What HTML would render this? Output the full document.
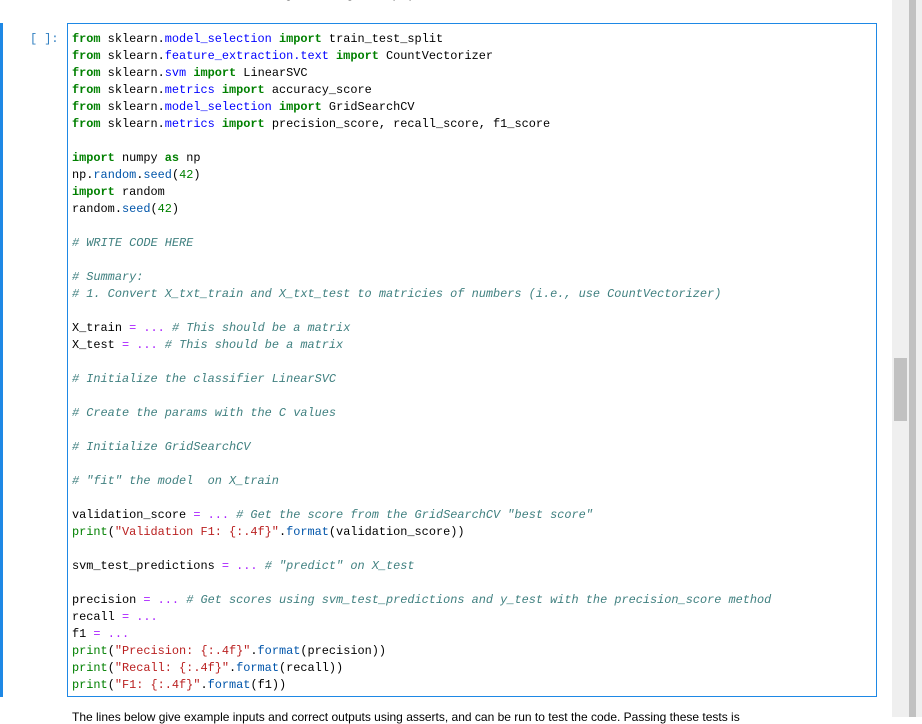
<!DOCTYPE html>
<html><head><style>
body{margin:0;width:922px;height:717px;background:#fff;overflow:hidden;position:relative;font-family:"Liberation Sans",sans-serif}
.bar{position:absolute;left:0;top:23px;width:3px;height:674px;background:#1e88e5}
.prompt{position:absolute;left:30px;top:31px;font:11.9px/17px "Liberation Mono",monospace;color:#307fc1}
.cell{position:absolute;left:67px;top:23px;width:808px;height:672px;border:1px solid #1e88e5;}
pre{margin:0;position:absolute;left:4px;top:7px;font:11.9px/17px "Liberation Mono",monospace;color:#000}
.k{color:#008000;font-weight:bold}.m{color:#0000ff}.c{color:#408080;font-style:italic}.o{color:#aa22ff}.s{color:#ba2121}.n{color:#008000}.b{color:#008000}.f{color:#0055aa}
.sb{position:absolute;left:892px;top:0;width:30px;height:717px;background:#efefef}
.sb2{position:absolute;left:909px;top:0;width:7px;height:717px;background:#c1c1c1}
.th{position:absolute;left:894px;top:358px;width:13px;height:63px;background:#c1c1c1}
.t{position:absolute;font-size:12px;color:#000;white-space:nowrap}
</style></head><body>
<div class="t" style="left:200px;top:-13px;color:#333">Fill in the missing code using the steps provided</div>
<div class="bar"></div>
<div class="prompt">[ ]:</div>
<div class="cell"><pre><span class="k">from</span> sklearn.<span class="m">model_selection</span> <span class="k">import</span> train_test_split
<span class="k">from</span> sklearn.<span class="m">feature_extraction.text</span> <span class="k">import</span> CountVectorizer
<span class="k">from</span> sklearn.<span class="m">svm</span> <span class="k">import</span> LinearSVC
<span class="k">from</span> sklearn.<span class="m">metrics</span> <span class="k">import</span> accuracy_score
<span class="k">from</span> sklearn.<span class="m">model_selection</span> <span class="k">import</span> GridSearchCV
<span class="k">from</span> sklearn.<span class="m">metrics</span> <span class="k">import</span> precision_score, recall_score, f1_score

<span class="k">import</span> numpy <span class="k">as</span> np
np.<span class="f">random</span>.<span class="f">seed</span>(<span class="n">42</span>)
<span class="k">import</span> random
random.<span class="f">seed</span>(<span class="n">42</span>)

<span class="c"># WRITE CODE HERE</span>

<span class="c"># Summary:</span>
<span class="c"># 1. Convert X_txt_train and X_txt_test to matricies of numbers (i.e., use CountVectorizer)</span>

X_train <span class="o">=</span> <span class="o">...</span> <span class="c"># This should be a matrix</span>
X_test <span class="o">=</span> <span class="o">...</span> <span class="c"># This should be a matrix</span>

<span class="c"># Initialize the classifier LinearSVC</span>

<span class="c"># Create the params with the C values</span>

<span class="c"># Initialize GridSearchCV</span>

<span class="c"># "fit" the model  on X_train</span>

validation_score <span class="o">=</span> <span class="o">...</span> <span class="c"># Get the score from the GridSearchCV "best score"</span>
<span class="b">print</span>(<span class="s">"Validation F1: {:.4f}"</span>.<span class="f">format</span>(validation_score))

svm_test_predictions <span class="o">=</span> <span class="o">...</span> <span class="c"># "predict" on X_test</span>

precision <span class="o">=</span> <span class="o">...</span> <span class="c"># Get scores using svm_test_predictions and y_test with the precision_score method</span>
recall <span class="o">=</span> <span class="o">...</span>
f1 <span class="o">=</span> <span class="o">...</span>
<span class="b">print</span>(<span class="s">"Precision: {:.4f}"</span>.<span class="f">format</span>(precision))
<span class="b">print</span>(<span class="s">"Recall: {:.4f}"</span>.<span class="f">format</span>(recall))
<span class="b">print</span>(<span class="s">"F1: {:.4f}"</span>.<span class="f">format</span>(f1))</pre></div>
<div class="t" style="left:72px;top:710px">The lines below give example inputs and correct outputs using asserts, and can be run to test the code. Passing these tests is</div>
<div class="sb"></div><div class="sb2"></div><div class="th"></div>
</body></html>
